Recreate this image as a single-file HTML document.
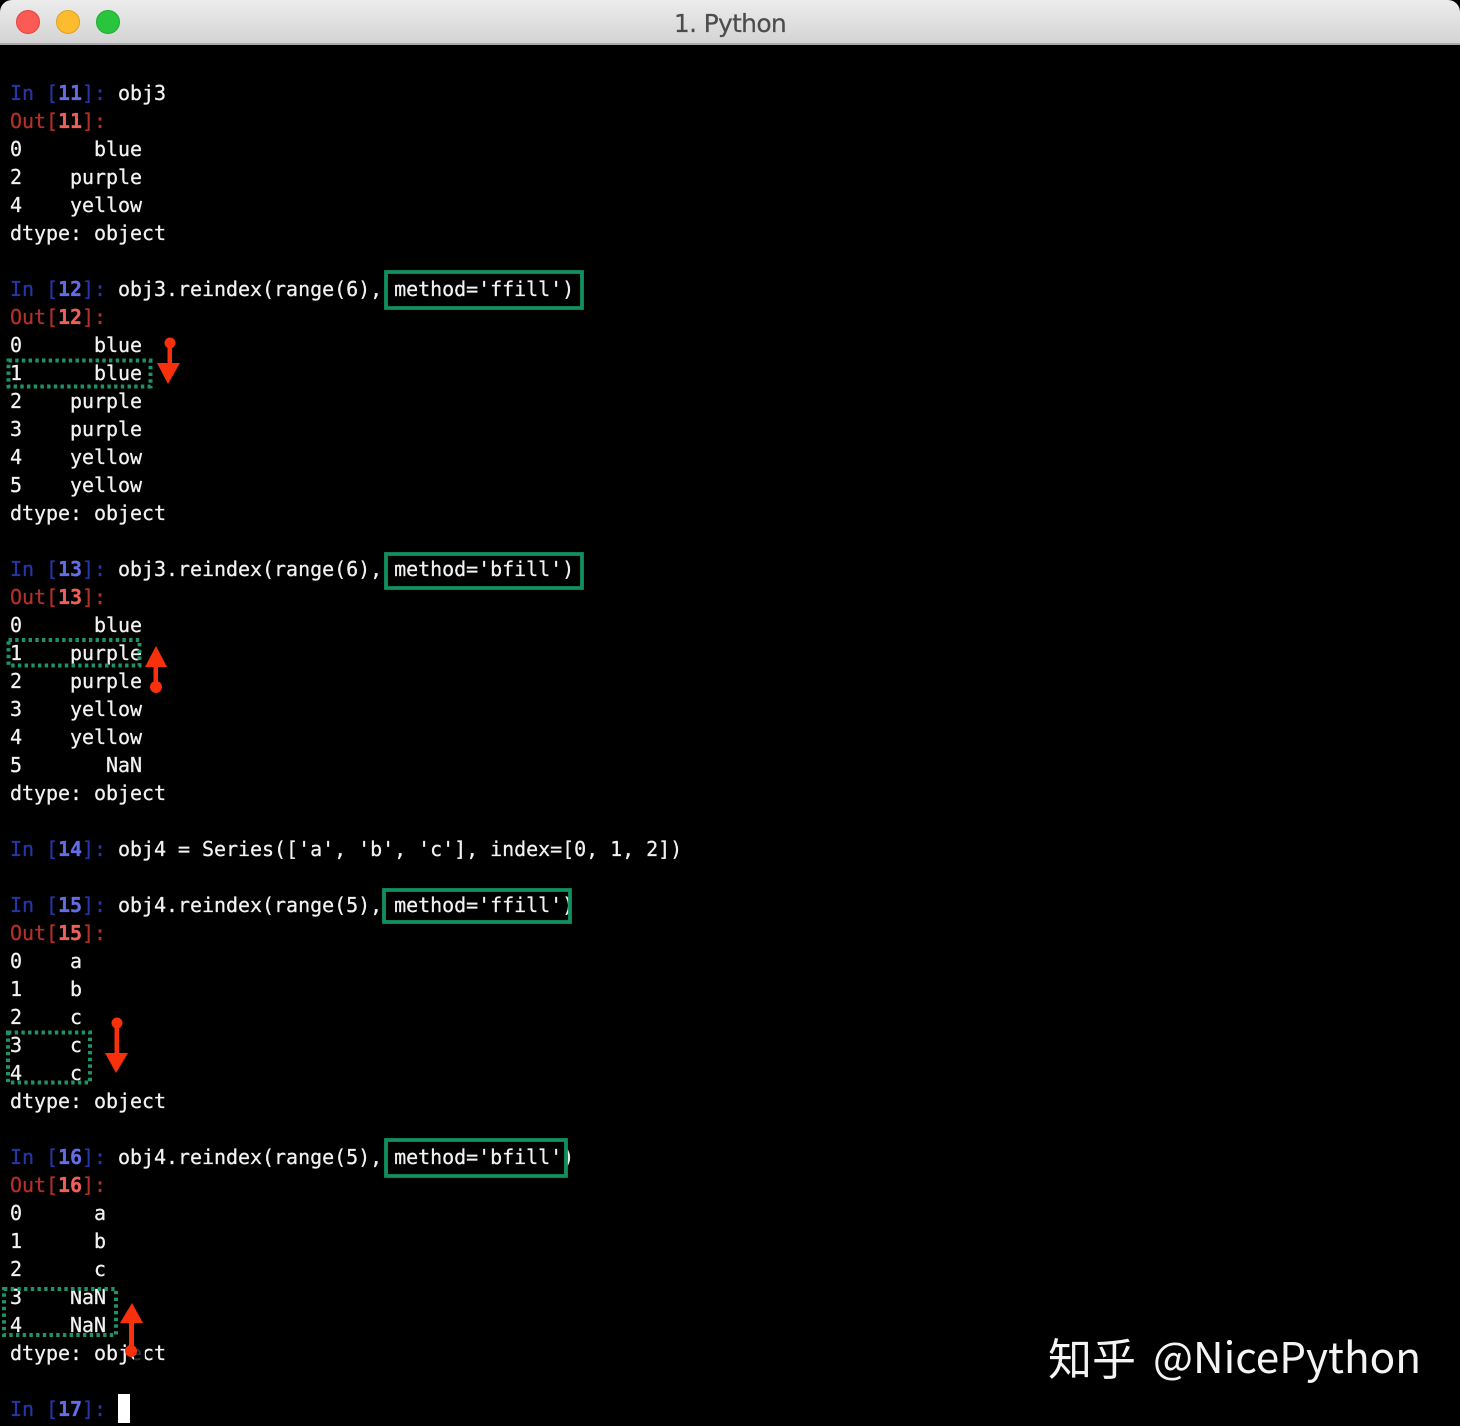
<!DOCTYPE html>
<html><head><meta charset="utf-8"><style>
html,body{margin:0;padding:0;background:#000;}
#w{position:relative;width:1460px;height:1426px;background:#000;overflow:hidden;}
#bar{position:absolute;left:0;top:0;width:1460px;height:43px;background:linear-gradient(#ececec,#d4d4d4);border-bottom:2px solid #a8a8a8;border-radius:12px 12px 0 0;}
#title{position:absolute;left:0;width:1460px;top:8px;text-align:center;font:25px/32px "DejaVu Sans","Liberation Sans",sans-serif;color:#4c4c4c;letter-spacing:-.7px;-webkit-text-stroke:.2px #4c4c4c;}
.d{position:absolute;top:10px;width:24px;height:24px;border-radius:50%;box-sizing:border-box;}
pre{position:absolute;left:10px;top:79px;margin:0;font:20px/28px "DejaVu Sans Mono","Liberation Mono",monospace;letter-spacing:-.04px;color:#f2f2f2;-webkit-text-stroke:.25px currentColor;}
.i{color:#2636a8}.n{color:#646ce6;font-weight:bold}.o{color:#b5302a}.m{color:#f0605a;font-weight:bold}
#cur{position:absolute;left:118px;top:1394px;width:12px;height:29px;background:#fff;}
#wm{position:absolute;left:1048px;top:1324px;font:44px/64px "Noto Sans CJK SC","Liberation Sans",sans-serif;color:#f4f4f4;white-space:nowrap;}
#wm span{position:absolute;left:105px;top:0;font-size:42.3px;}
svg{position:absolute;left:0;top:0;}
</style></head><body><div id="w">
<div id="bar"><div id="title">1. Python</div>
<div class="d" style="left:16px;background:#fc5a55;border:1px solid #e0443e"></div>
<div class="d" style="left:56px;background:#fdbc2e;border:1px solid #dea123"></div>
<div class="d" style="left:96px;background:#29c53f;border:1px solid #1dad2b"></div></div>
<pre><span class="i">In [</span><span class="n">11</span><span class="i">]:</span> obj3
<span class="o">Out[</span><span class="m">11</span><span class="o">]:</span>
0      blue
2    purple
4    yellow
dtype: object

<span class="i">In [</span><span class="n">12</span><span class="i">]:</span> obj3.reindex(range(6), method='ffill')
<span class="o">Out[</span><span class="m">12</span><span class="o">]:</span>
0      blue
1      blue
2    purple
3    purple
4    yellow
5    yellow
dtype: object

<span class="i">In [</span><span class="n">13</span><span class="i">]:</span> obj3.reindex(range(6), method='bfill')
<span class="o">Out[</span><span class="m">13</span><span class="o">]:</span>
0      blue
1    purple
2    purple
3    yellow
4    yellow
5       NaN
dtype: object

<span class="i">In [</span><span class="n">14</span><span class="i">]:</span> obj4 = Series(['a', 'b', 'c'], index=[0, 1, 2])

<span class="i">In [</span><span class="n">15</span><span class="i">]:</span> obj4.reindex(range(5), method='ffill')
<span class="o">Out[</span><span class="m">15</span><span class="o">]:</span>
0    a
1    b
2    c
3    c
4    c
dtype: object

<span class="i">In [</span><span class="n">16</span><span class="i">]:</span> obj4.reindex(range(5), method='bfill')
<span class="o">Out[</span><span class="m">16</span><span class="o">]:</span>
0      a
1      b
2      c
3    NaN
4    NaN
dtype: object

<span class="i">In [</span><span class="n">17</span><span class="i">]:</span></pre>
<div id="cur"></div>
<svg width="1460" height="1426" viewBox="0 0 1460 1426" fill="none">
<g stroke="#128f5e" stroke-width="3.8">
<rect x="386" y="272" width="196" height="36"/>
<rect x="386" y="554" width="196" height="34"/>
<rect x="384" y="890" width="186" height="32"/>
<rect x="386" y="1140" width="180" height="36"/>
</g>
<g stroke="#1f9266" stroke-width="4" stroke-dasharray="3.4 3.3">
<rect x="8.500" y="360.500" width="142" height="26"/>
<rect x="8.500" y="640" width="131" height="25.500"/>
<rect x="8" y="1032.500" width="82" height="50"/>
<rect x="4" y="1289" width="112" height="46"/>
</g>
<g fill="#f8300c" stroke="none">
<circle cx="170" cy="343" r="5.500"/><rect x="167.500" y="343" width="4.500" height="22"/><path d="M157 363H180L168 384Z"/>
<path d="M156 646L167 667H145Z"/><rect x="153.500" y="665" width="4.500" height="22"/><circle cx="156" cy="687" r="6"/>
<circle cx="117" cy="1023" r="5.500"/><rect x="114.500" y="1023" width="4.500" height="31"/><path d="M105 1053H128L116 1073Z"/>
</g>
<rect x="134" y="1342" width="11" height="22" fill="#000" opacity=".8"/>
<g fill="#f8300c" stroke="none">
<path d="M132 1303L143 1323H120Z"/><rect x="129" y="1321" width="5" height="30"/><circle cx="131" cy="1351" r="6"/>
</g>
</svg>
<div id="wm">知乎<span>@NicePython</span></div>
</div></body></html>
